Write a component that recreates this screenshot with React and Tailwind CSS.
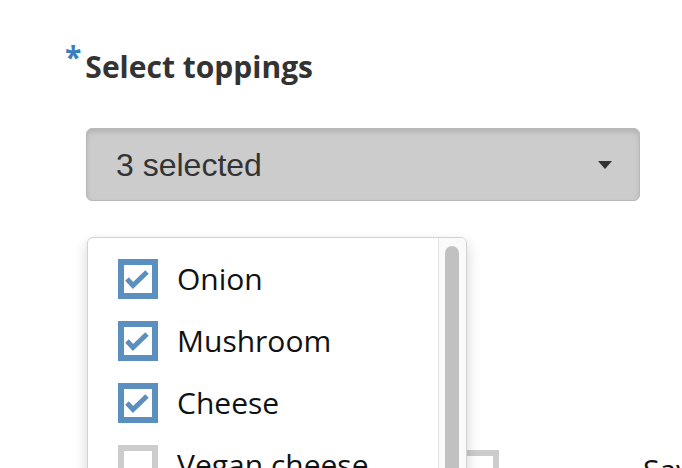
import React from "react";

const toppings = [
  { name: "Onion", checked: true },
  { name: "Mushroom", checked: true },
  { name: "Cheese", checked: true },
  { name: "Vegan cheese", checked: false },
  { name: "Pepperoni", checked: false },
];

function Box({ checked }) {
  return (
    <span
      className={
        "flex h-[40px] w-[40px] shrink-0 items-center justify-center border-[6px] bg-white " +
        (checked ? "border-[#5a8fc0]" : "border-[#cccccc]")
      }
    >
      {checked && (
        <svg width="28" height="28" viewBox="0 0 28 28">
          <polyline
            points="3,14 9,20.5 23,7"
            fill="none"
            stroke="#5a8fc0"
            strokeWidth="5"
            strokeLinejoin="miter"
          />
        </svg>
      )}
    </span>
  );
}

export default function App() {
  return (
    <div className="relative h-[468px] w-[682px] overflow-hidden bg-white font-['Open_Sans',sans-serif]">
      {/* label */}
      <div className="flex items-start pl-[65px] pt-[47px]">
        <span className="text-[30px] font-bold leading-[20px] text-[#3b7dbd]">*</span>
        <span className="ml-[4px] text-[30px] font-bold leading-[40px] text-[#333333]">
          Select toppings
        </span>
      </div>

      {/* select */}
      <div className="relative ml-[86px] mt-[41px] w-[554px]">
        <button className="flex h-[73px] w-full items-center justify-between rounded-[6px] border border-[#b8b8b8] bg-[#cccccc] pl-[29px] pr-[27px] font-['Liberation_Sans',Arial,sans-serif] text-[32px] text-[#333333] shadow-[inset_0_3px_5px_rgba(0,0,0,0.12)]">
          <span>3 selected</span>
          <svg width="14" height="8" viewBox="0 0 14 8">
            <polygon points="0,0 14,0 7,8" fill="#333333" />
          </svg>
        </button>

        {/* menu */}
        <div className="absolute left-[1px] top-[109px] z-10 flex h-[300px] w-[380px] overflow-hidden rounded-[6px] border border-[#d2d2d2] bg-white shadow-[0_6px_14px_rgba(0,0,0,0.18)]">
          <ul className="flex-1 pl-[30px] pt-[21px]">
            {toppings.map((t) => (
              <li key={t.name} className="flex h-[62px] items-start gap-[19px]">
                <Box checked={t.checked} />
                <span className="text-[30px] leading-[40px] text-[#111111]">{t.name}</span>
              </li>
            ))}
          </ul>
          <div className="w-[28px] border-l border-[#e3e3e3] bg-[#fafafa] pl-[6px] pt-[8px]">
            <div className="h-[260px] w-[14px] rounded-full bg-[#c1c1c1]" />
          </div>
        </div>
      </div>

      {/* content behind the menu */}
      <div className="mt-[249px] flex items-start">
        <span className="ml-[459px] h-[40px] w-[40px] shrink-0 border-[6px] border-[#cccccc]" />
        <span className="ml-[144px] shrink-0 whitespace-nowrap text-[30px] leading-[40px] text-[#111111]">
          Save
        </span>
      </div>
    </div>
  );
}
